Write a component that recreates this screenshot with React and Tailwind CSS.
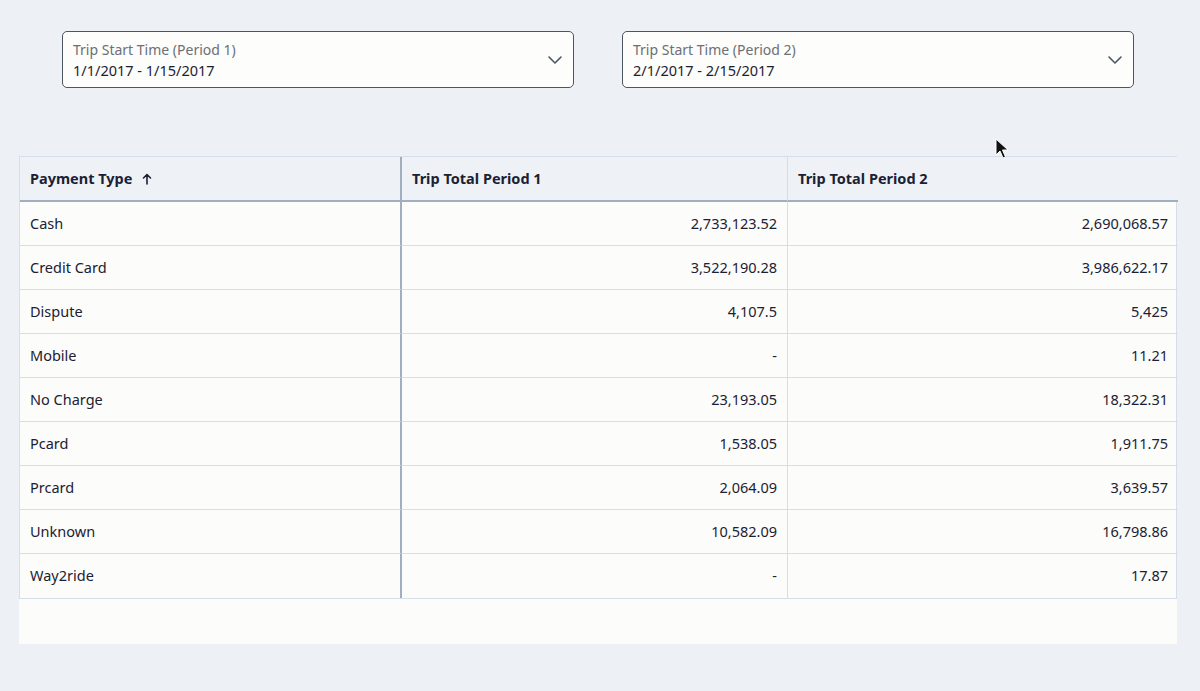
const rows = [
  ["Cash", "2,733,123.52", "2,690,068.57"],
  ["Credit Card", "3,522,190.28", "3,986,622.17"],
  ["Dispute", "4,107.5", "5,425"],
  ["Mobile", "-", "11.21"],
  ["No Charge", "23,193.05", "18,322.31"],
  ["Pcard", "1,538.05", "1,911.75"],
  ["Prcard", "2,064.09", "3,639.57"],
  ["Unknown", "10,582.09", "16,798.86"],
  ["Way2ride", "-", "17.87"],
];

function Select({ label, value }) {
  return (
    <div className="flex h-[57px] w-[512px] items-center justify-between rounded-[5px] border border-[#4b5563] bg-[#fdfdfb] pl-[10px] pr-[10px]">
      <div className="flex flex-col leading-[21px]">
        <span className="text-[14px] text-[#6b6f76]">{label}</span>
        <span className="text-[14.5px] text-[#1b2133]">{value}</span>
      </div>
      <svg width="16" height="16" viewBox="0 0 16 16" fill="none" stroke="#4b5563" strokeWidth="1.6" strokeLinecap="round" strokeLinejoin="round">
        <path d="M2 5l6 6 6-6" />
      </svg>
    </div>
  );
}

export default function App() {
  return (
    <div className="relative h-[691px] w-[1200px] bg-[#edf1f6] font-['Roboto',sans-serif] text-[#1b2133]">
      <div className="flex gap-[48px] pl-[62px] pt-[31px]">
        <Select label="Trip Start Time (Period 1)" value="1/1/2017 - 1/15/2017" />
        <Select label="Trip Start Time (Period 2)" value="2/1/2017 - 2/15/2017" />
      </div>
      <div className="ml-[19px] mt-[68px] w-[1158px] bg-[#fcfcfa] pb-[45px]">
        <div className="grid grid-cols-[382px_386px_390px] border border-[#d6dfe9]">
          <div className="flex h-[45px] items-center gap-[10px] border-b-2 border-r-2 border-b-[#a0aec0] border-r-[#a0aec0] bg-[#eef2f7] pl-[10px] text-[14.5px] font-bold">
            Payment Type
            <svg width="10" height="12" viewBox="0 0 10 12" fill="none" stroke="#1b2133" strokeWidth="1.6" strokeLinecap="round" strokeLinejoin="round">
              <path d="M5 11V1.5M1.5 5L5 1.5 8.5 5" />
            </svg>
          </div>
          <div className="flex h-[45px] items-center border-b-2 border-r border-b-[#a0aec0] border-r-[#d6dfe9] bg-[#eef2f7] pl-[10px] text-[14.5px] font-bold">Trip Total Period 1</div>
          <div className="flex h-[45px] items-center border-b-2 border-b-[#a0aec0] bg-[#eef2f7] pl-[10px] text-[14.5px] font-bold">Trip Total Period 2</div>
          {rows.map((r, i) => (
            <>
              <div key={i + "a"} className={`flex h-[44px] items-center border-r-2 border-r-[#a0aec0] pl-[10px] text-[14.5px] ${i < rows.length - 1 ? "border-b border-b-[#d6dfe9]" : ""}`}>{r[0]}</div>
              <div key={i + "b"} className={`flex h-[44px] items-center justify-end border-r border-r-[#d6dfe9] pr-[10px] text-[14.5px] ${i < rows.length - 1 ? "border-b border-b-[#d6dfe9]" : ""}`}>{r[1]}</div>
              <div key={i + "c"} className={`flex h-[44px] items-center justify-end pr-[10px] text-[14.5px] ${i < rows.length - 1 ? "border-b border-b-[#d6dfe9]" : ""}`}>{r[2]}</div>
            </>
          ))}
        </div>
      </div>
      <svg className="absolute left-[995px] top-[138px]" width="14" height="22" viewBox="0 0 14 22">
        <path d="M1 1v16l4-4 3 7 2.5-1-3-7h5.5z" fill="#111" stroke="#fff" strokeWidth="1" />
      </svg>
    </div>
  );
}
